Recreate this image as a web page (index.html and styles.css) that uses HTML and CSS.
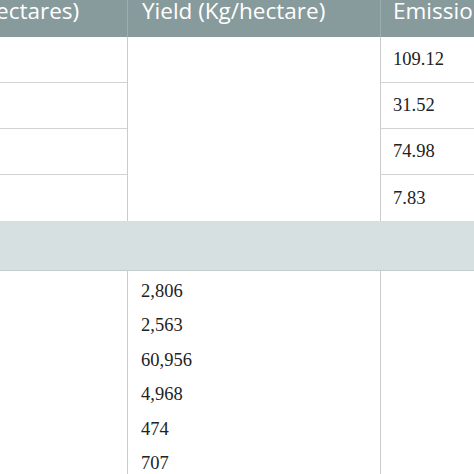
FILE: index.html
```html
<!DOCTYPE html>
<html>
<head>
<meta charset="utf-8">
<link rel="stylesheet" href="styles.css">
</head>
<body>
<div class="table">
  <div class="th c1">ectares)</div>
  <div class="th c2">Yield (Kg/hectare)</div>
  <div class="th c3">Emissions (kg CO2-eq/hectare)</div>

  <div class="td c1 r1 line"></div>
  <div class="td c2 merged"></div>
  <div class="td c3 r1 line">109.12</div>

  <div class="td c1 r2 line"></div>
  <div class="td c3 r2 line">31.52</div>

  <div class="td c1 r3 line"></div>
  <div class="td c3 r3 line">74.98</div>

  <div class="td c1 r4"></div>
  <div class="td c3 r4">7.83</div>

  <div class="band"></div>

  <div class="td c1 low"></div>
  <div class="td c2 low list">
    <div class="v">2,806</div>
    <div class="v">2,563</div>
    <div class="v">60,956</div>
    <div class="v">4,968</div>
    <div class="v">474</div>
    <div class="v">707</div>
  </div>
  <div class="td c3 low"></div>
</div>
</body>
</html>
```

FILE: styles.css
```css
html, body {
  margin: 0;
  padding: 0;
  background: #ffffff;
  overflow: hidden;
  width: 474px;
  height: 474px;
}

.table {
  display: grid;
  grid-template-columns: 127px 253px 94px;
  grid-template-rows: 37px 46px 46px 46px 46px 50px auto;
  width: 474px;
}

.th {
  background: #879b9c;
  color: #ffffff;
  font-family: "Open Sans", "Liberation Sans", sans-serif;
  font-size: 22.5px;
  line-height: 22px;
  padding: 0 0 0 13px;
  white-space: nowrap;
}

.th.c1 {
  padding-left: 0;
  text-indent: -4px;
  overflow: hidden;
}

.th.c2, .th.c3 {
  border-left: 1px solid #9cadae;
}

.th.c2 { padding-left: 14px; }
.th.c3 { padding-left: 12px; overflow: hidden; }

.td {
  font-family: "Liberation Serif", "Times New Roman", serif;
  font-size: 18.5px;
  color: #222222;
  white-space: nowrap;
}

.td.c2, .td.c3 {
  border-left: 1px solid #cccccc;
}

.td.c3 {
  padding-left: 12px;
  display: flex;
  align-items: center;
}

.c1 { grid-column: 1; }
.c2 { grid-column: 2; }
.c3 { grid-column: 3; }

.r1 { grid-row: 2; }
.r2 { grid-row: 3; }
.r3 { grid-row: 4; }
.r4 { grid-row: 5; }

.merged { grid-row: 2 / 6; }

.line {
  border-bottom: 1px solid #d2d2d2;
}

.band {
  grid-column: 1 / 4;
  grid-row: 6;
  background: #d6e0e1;
  border-bottom: 1px solid #c3cdce;
}

.low {
  grid-row: 7;
  height: 210px;
}

.list {
  padding: 3px 0 0 13px;
}

.v {
  height: 34.4px;
  line-height: 34.4px;
}
```
